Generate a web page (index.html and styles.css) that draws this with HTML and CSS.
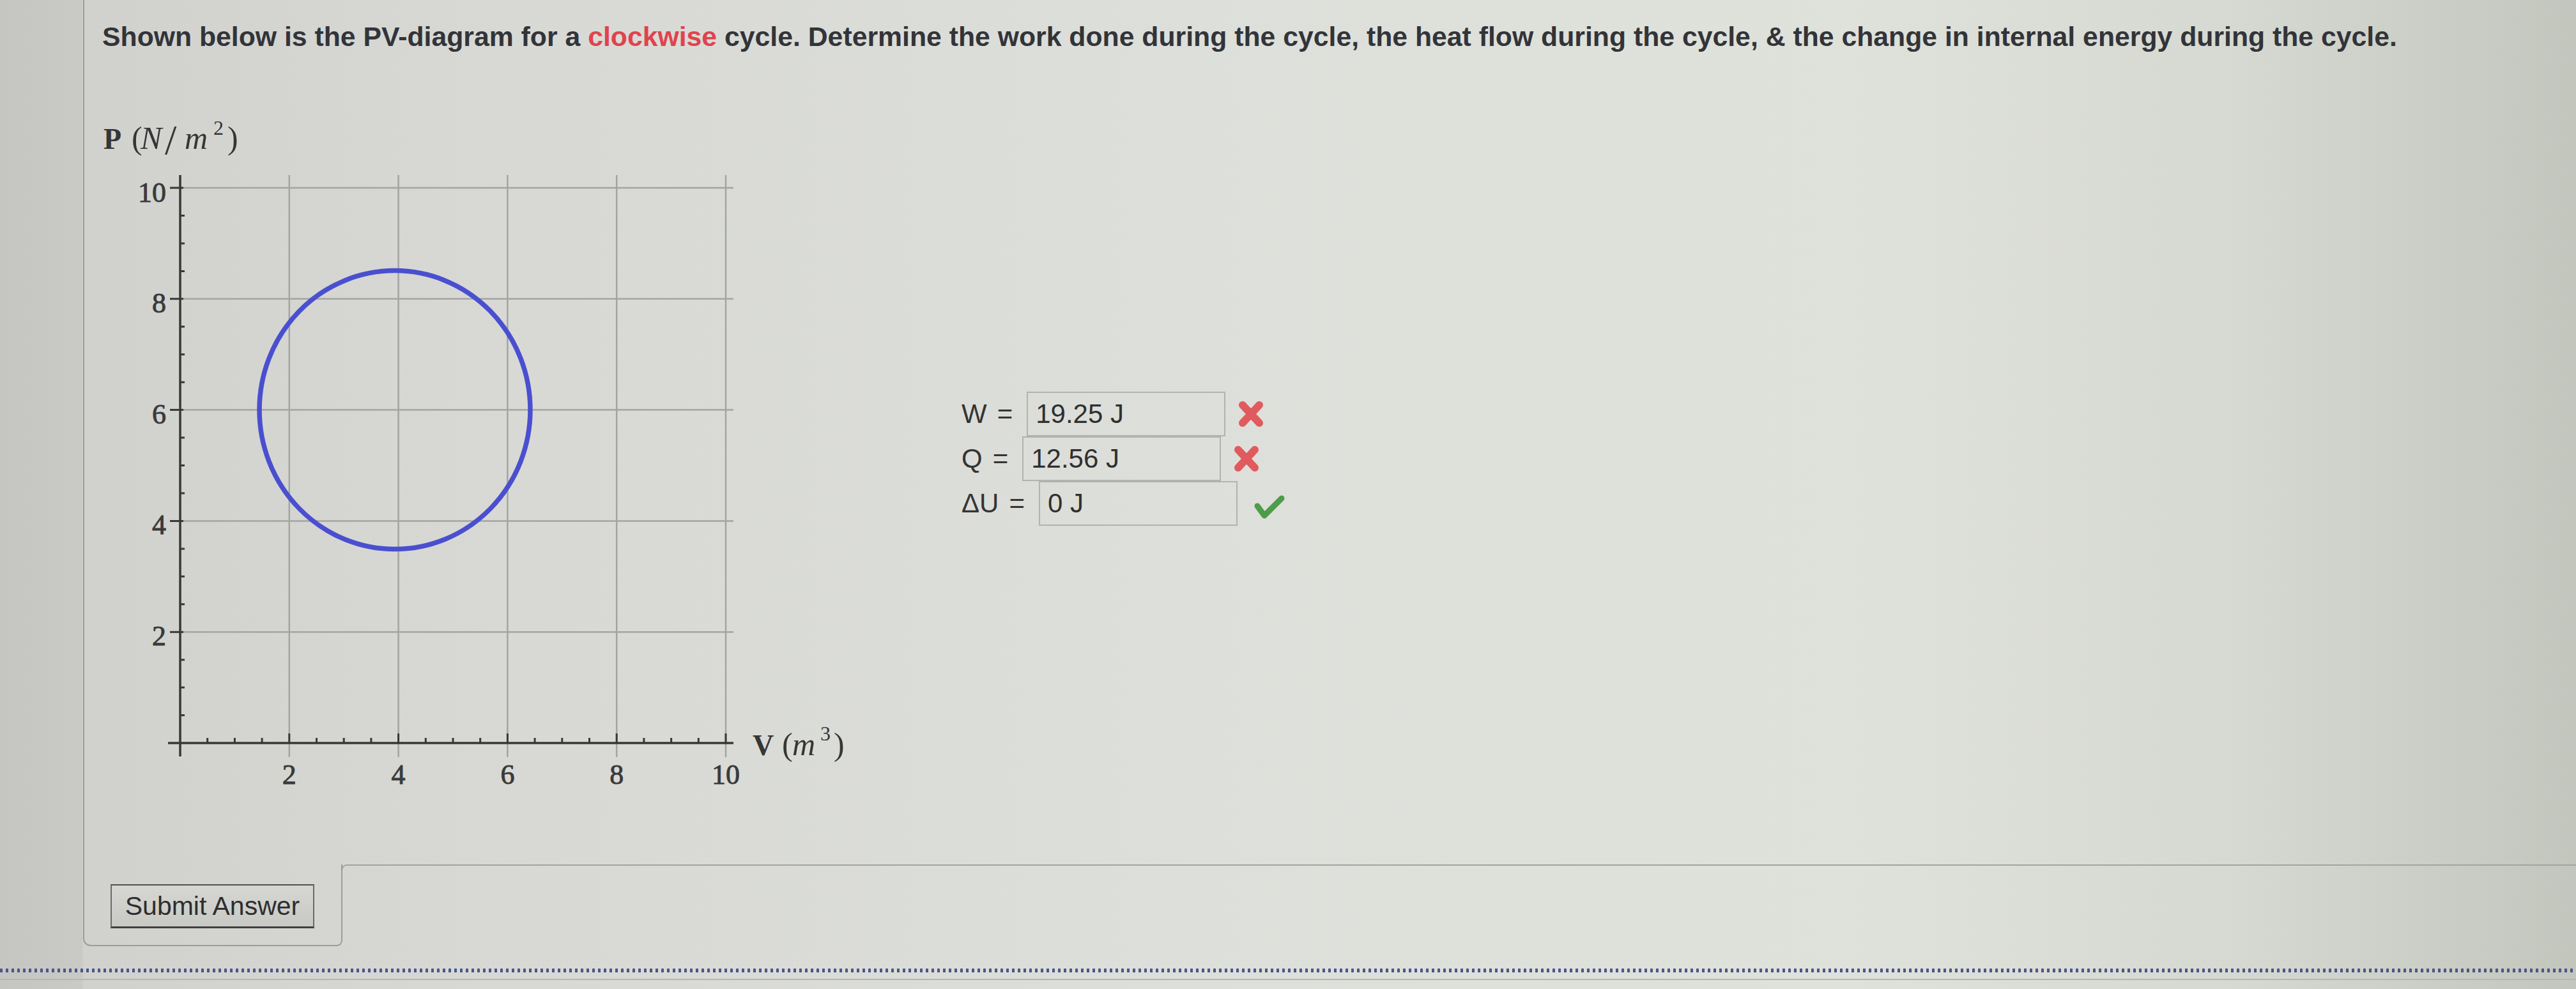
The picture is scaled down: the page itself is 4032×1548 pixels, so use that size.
FILE: index.html
```html
<!DOCTYPE html>
<html lang="en">
<head>
<meta charset="utf-8">
<title>PV-diagram question</title>
<link rel="stylesheet" href="styles.css">
</head>
<body>
<div class="page">
  <div class="question">
    <div class="main">
      <p class="prompt">Shown below is the PV-diagram for a <span class="hl">clockwise</span> cycle. Determine the work done during the cycle, the heat flow during the cycle, &amp; the change in internal energy during the cycle.</p>
      <div class="content">
        <svg class="graph" width="1200" height="1271" xmlns="http://www.w3.org/2000/svg">
          <g transform="translate(-160,-82)">
            <g class="grid">
              <path d="M452.8 274V1185M623.6 274V1185M794.4 274V1185M965.2 274V1185M1136 274V1185"/>
              <path d="M282 989.2H1148M282 815.4H1148M282 641.6H1148M282 467.8H1148M282 294H1148"/>
            </g>
            <g class="axis">
              <path d="M282 274V1184M263 1163H1148"/>
              <path class="tick" d="M324.7 1163v-8M367.4 1163v-8M410.1 1163v-8M495.5 1163v-8M538.2 1163v-8M580.9 1163v-8M666.3 1163v-8M709 1163v-8M751.7 1163v-8M837.1 1163v-8M879.8 1163v-8M922.5 1163v-8M1007.9 1163v-8M1050.6 1163v-8M1093.3 1163v-8"/>
              <path class="tick" d="M452.8 1163v-15M623.6 1163v-15M794.4 1163v-15M965.2 1163v-15M1136 1163v-15"/>
              <path class="tick" d="M282 1119.6h7M282 1076.1h7M282 1032.7h7M282 945.8h7M282 902.3h7M282 858.9h7M282 772h7M282 728.5h7M282 685.1h7M282 598.2h7M282 554.7h7M282 511.3h7M282 424.4h7M282 380.9h7M282 337.5h7"/>
              <path class="tick" d="M266 989.2h21M266 815.4h21M266 641.6h21M266 467.8h21M266 294h21"/>
            </g>
            <ellipse class="cycle" cx="618" cy="641.6" rx="212" ry="218"/>
            <g class="lbl-y">
              <text x="260" y="316">10</text>
              <text x="260" y="489">8</text>
              <text x="260" y="663">6</text>
              <text x="260" y="836">4</text>
              <text x="260" y="1010">2</text>
            </g>
            <g class="lbl-x">
              <text x="452.8" y="1227">2</text>
              <text x="623.6" y="1227">4</text>
              <text x="794.4" y="1227">6</text>
              <text x="965.2" y="1227">8</text>
              <text x="1136" y="1227">10</text>
            </g>
            <text class="axis-title" y="233"><tspan class="rm" x="162">P</tspan><tspan class="paren" x="206">(</tspan><tspan class="it" x="220">N</tspan><tspan class="slash" x="258" y="241">/</tspan><tspan class="it" x="289" y="233">m</tspan><tspan class="sup" x="334" y="211">2</tspan><tspan class="paren" x="356" y="233">)</tspan></text>
            <text class="axis-title" y="1182"><tspan class="rm" x="1178">V</tspan><tspan class="paren" x="1224">(</tspan><tspan class="it" x="1240">m</tspan><tspan class="sup" x="1284" y="1159">3</tspan><tspan class="paren" x="1305" y="1182">)</tspan></text>
          </g>
        </svg>
        <div class="answers">
          <div class="row">
            <span class="var">W</span><span class="eq">=</span>
            <span class="box">19.25 J</span>
            <svg class="mark" width="44" height="46" viewBox="0 0 44 46"><path class="wrong" d="M9 9L35 37M35 9L9 37"/></svg>
          </div>
          <div class="row">
            <span class="var">Q</span><span class="eq">=</span>
            <span class="box">12.56 J</span>
            <svg class="mark" width="44" height="46" viewBox="0 0 44 46"><path class="wrong" d="M9 9L35 37M35 9L9 37"/></svg>
          </div>
          <div class="row">
            <span class="var">&Delta;U</span><span class="eq">=</span>
            <span class="box">0 J</span>
            <svg class="mark mark-ok" width="50" height="44" viewBox="0 0 50 44"><path class="right" d="M6 20L17 35L44 8"/></svg>
          </div>
        </div>
      </div>
    </div>
    <div class="footer">
      <div class="tab"><button class="submit" type="button">Submit Answer</button></div>
      <div class="rest"></div>
    </div>
  </div>
  <div class="dots"></div>
  <div class="rule"></div>
</div>
</body>
</html>
```

FILE: styles.css
```css
html, body {
  margin: 0;
  padding: 0;
}

body {
  width: 4032px;
  height: 1548px;
  overflow: hidden;
  background: linear-gradient(90deg, #c5c6c2 0, #c9cac6 128px, #d1d2ce 131px, #d8d9d5 800px, #dddfda 1900px, #dfe1db 2900px, #d6d9d1 3500px, #c2c6bd 4032px);
  font-family: "Liberation Sans", Arial, sans-serif;
  color: #333;
}

.page {
  width: 4032px;
}

.question {
  margin-left: 130px;
}

.main {
  border-left: 2px solid #9c9d99;
  padding: 32px 0 0 28px;
}

.prompt {
  margin: 0;
  font-size: 42.75px;
  line-height: 50px;
  font-weight: bold;
  color: #323439;
  white-space: nowrap;
}

.hl {
  color: #e0434d;
}

.content {
  display: flex;
  align-items: flex-start;
}

.graph {
  display: block;
  flex: none;
}

.grid path {
  stroke: #a4a5a2;
  stroke-width: 2.5;
  fill: none;
}

.axis path {
  stroke: #383838;
  stroke-width: 3.5;
  fill: none;
}

.axis .tick {
  stroke-width: 3;
}

.cycle {
  fill: none;
  stroke: #4a4fd0;
  stroke-width: 7.5;
}

.lbl-y text,
.lbl-x text {
  font-family: "Liberation Serif", "Times New Roman", serif;
  font-size: 44px;
  fill: #3a3a3a;
  stroke: #3a3a3a;
  stroke-width: 0.9;
}

.lbl-y text {
  text-anchor: end;
}

.lbl-x text {
  text-anchor: middle;
}

.axis-title {
  font-family: "Liberation Serif", "Times New Roman", serif;
  font-size: 50px;
  fill: #363636;
}

.axis-title .rm {
  font-size: 46px;
  font-weight: bold;
}

.axis-title .it {
  font-style: italic;
}

.axis-title .paren {
  font-size: 50px;
}

.axis-title .slash {
  font-size: 66px;
}

.axis-title .sup {
  font-size: 32px;
}

.answers {
  margin: 531px 0 0 145px;
  display: flex;
  flex-direction: column;
}

.row {
  display: flex;
  align-items: center;
  height: 70px;
  font-size: 42px;
  color: #343434;
}

.eq {
  margin-left: 16px;
}

.box {
  box-sizing: border-box;
  height: 70px;
  width: 311px;
  margin-left: 22px;
  padding: 0 12px;
  display: flex;
  align-items: center;
  border: 2px solid #b1b3ae;
  color: #303030;
}

.mark {
  display: block;
  margin-left: 18px;
  flex: none;
}

.mark-ok {
  margin: 12px 0 0 25px;
}

.wrong {
  fill: none;
  stroke: #e15a5d;
  stroke-width: 12;
  stroke-linecap: round;
}

.right {
  fill: none;
  stroke: #4d9c49;
  stroke-width: 9;
  stroke-linecap: round;
  stroke-linejoin: round;
}

.footer {
  display: flex;
  align-items: flex-start;
}

.tab {
  box-sizing: border-box;
  width: 406px;
  height: 128px;
  flex: none;
  border-left: 2px solid #9c9d99;
  border-right: 2px solid #9c9d99;
  border-bottom: 2px solid #9c9d99;
  border-radius: 0 0 9px 12px;
  padding: 31px 0 0 41px;
}

.rest {
  flex: 1;
  height: 24px;
  margin-left: -2px;
  border-top: 2px solid #a3a4a0;
  border-left: 2px solid #9c9d99;
  border-top-left-radius: 9px;
}

.submit {
  box-sizing: border-box;
  width: 319px;
  height: 69px;
  padding: 0;
  font-family: "Liberation Sans", Arial, sans-serif;
  font-size: 41px;
  color: #2e2e2e;
  background: linear-gradient(180deg, #d6d7d3, #c8c9c5);
  border: 2px solid #6a6b68;
  border-top-color: #4f504e;
  border-bottom: 3px solid #3f403e;
}

.dots {
  margin-top: 35px;
  height: 6px;
  background: repeating-linear-gradient(90deg, #4b568a 0 4px, transparent 4px 9px);
}

.rule {
  margin-top: 10px;
  height: 2px;
  background: #b4b6b1;
}
```
